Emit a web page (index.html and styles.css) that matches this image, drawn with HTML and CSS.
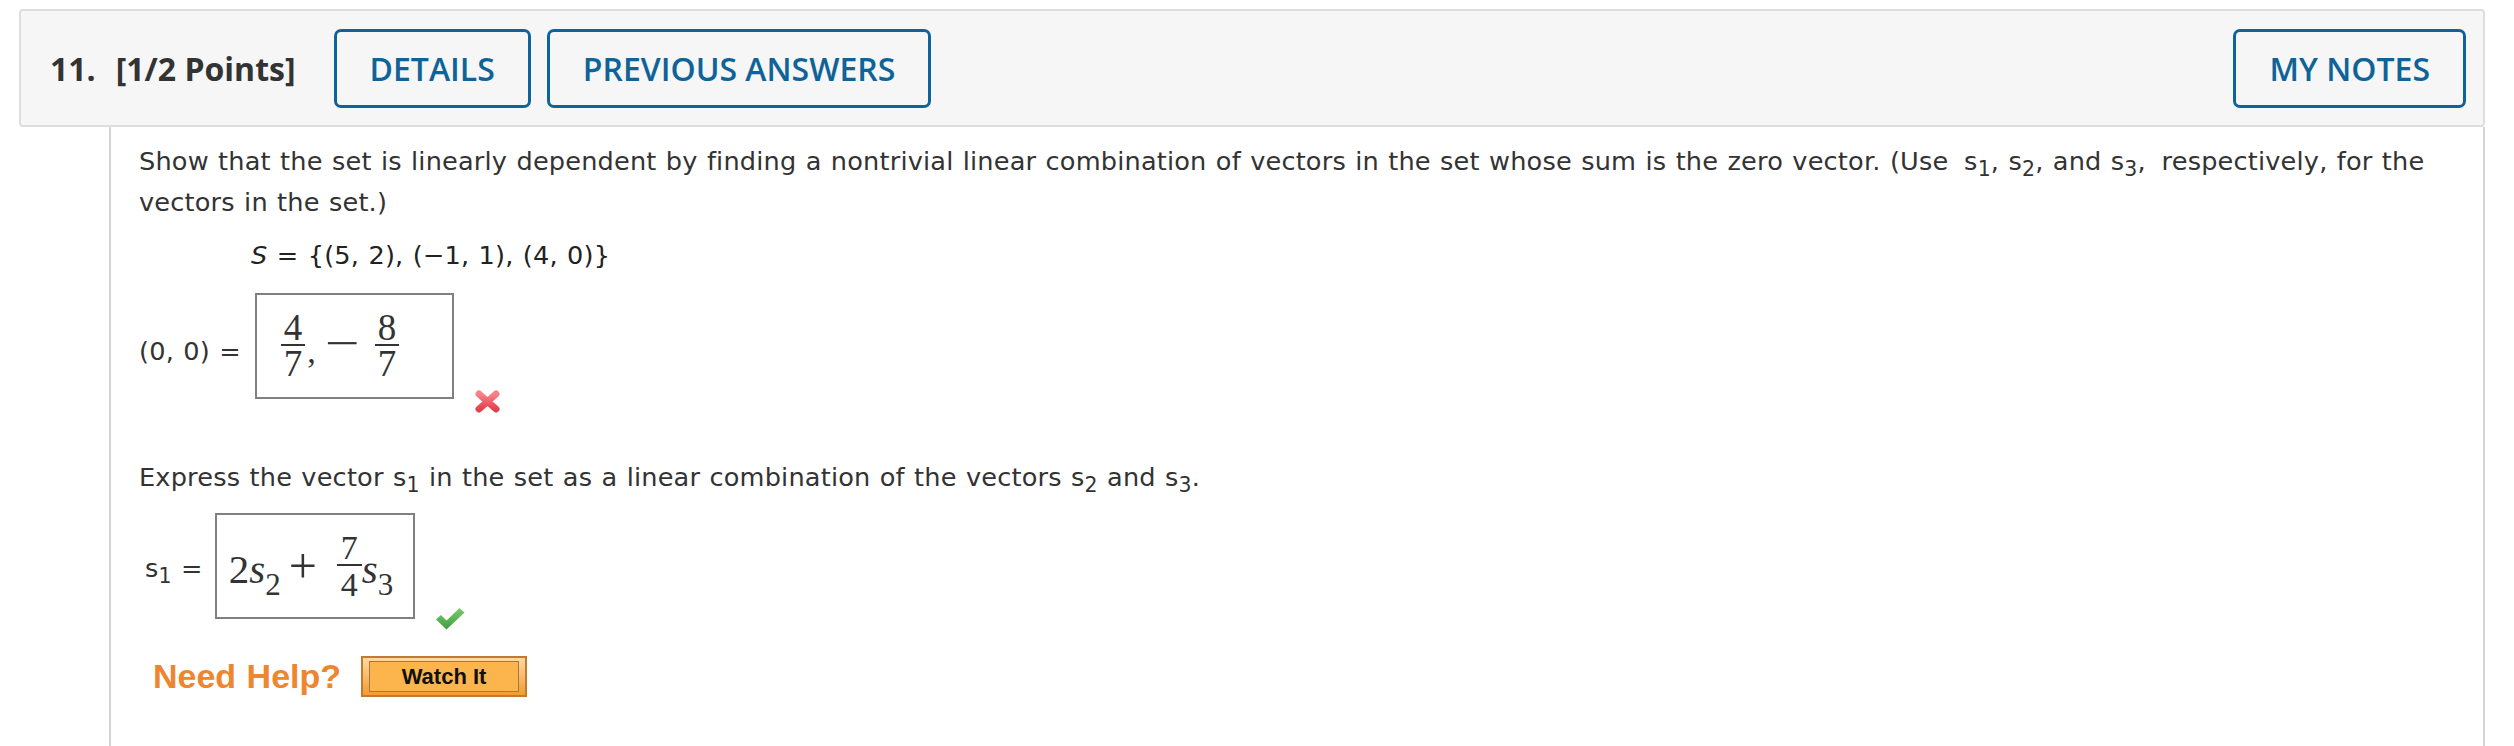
FILE: index.html
```html
<!DOCTYPE html>
<html>
<head>
<meta charset="utf-8">
<title>Question 11</title>
<link rel="stylesheet" href="styles.css">
</head>
<body>
<div class="page">
  <div class="qhead">
    <div class="qtitle"><span>11.</span><span>[1/2 Points]</span></div>
    <button class="qbtn">DETAILS</button>
    <button class="qbtn">PREVIOUS ANSWERS</button>
    <button class="qbtn notes">MY NOTES</button>
  </div>
  <div class="qbody">
    <p class="prompt">Show that the set is linearly dependent by finding a nontrivial linear combination of vectors in the set whose sum is the zero vector. (Use <span class="v">s<sub>1</sub></span>, <span class="v0">s<sub>2</sub></span>, and <span class="v0">s<sub>3</sub></span>, <span class="sp"></span>respectively, for the vectors in the set.)</p>
    <div class="setline"><i>S</i> = {(5, 2), (−1, 1), (4, 0)}</div>
    <div class="ansrow row1">
      <span class="label">(0, 0) =</span>
      <div class="ansbox box1">
        <span class="frac f1"><span class="num">4</span><span class="den">7</span></span>
        <span class="comma">,</span>
        <span class="minus">−</span>
        <span class="frac f1"><span class="num">8</span><span class="den">7</span></span>
      </div>
      <svg class="xmark" viewBox="0 0 27 23" width="27" height="23">
        <defs><linearGradient id="xg" x1="0" y1="0" x2="0" y2="1"><stop offset="0" stop-color="#f7828a"/><stop offset="1" stop-color="#e5414c"/></linearGradient></defs>
        <path d="M5 4 L22 19 M22 4 L5 19" stroke="url(#xg)" stroke-width="7" stroke-linecap="round"/>
      </svg>
    </div>
    <p class="prompt2">Express the vector s<sub>1</sub> in the set as a linear combination of the vectors s<sub>2</sub> and s<sub>3</sub>.</p>
    <div class="ansrow row2">
      <span class="label">s<sub>1</sub> =</span>
      <div class="ansbox box2">
        <span class="m">2<i>s</i><sub class="ms">2</sub></span>
        <span class="plus">+</span>
        <span class="frac f2"><span class="num">7</span><span class="den">4</span></span>
        <span class="m"><i>s</i><sub class="ms">3</sub></span>
      </div>
      <svg class="check" viewBox="0 0 30 24" width="30" height="24">
        <defs><linearGradient id="cg" x1="0" y1="0" x2="0" y2="1"><stop offset="0" stop-color="#7ccc6c"/><stop offset="1" stop-color="#3f9c3f"/></linearGradient></defs>
        <path d="M1 13.5 L6 9 L11.5 14.5 L24.5 2 L29.5 6.5 L11.5 23.5 Z" fill="url(#cg)"/>
      </svg>
    </div>
    <div class="help">
      <span class="needhelp">Need Help?</span>
      <button class="watch"><span>Watch It</span></button>
    </div>
  </div>
</div>
</body>
</html>
```

FILE: styles.css
```css
* { box-sizing: border-box; }
body {
  margin: 0;
  background: #fff;
  font-family: "DejaVu Sans", Verdana, sans-serif;
  color: #333;
}
.page { padding: 9px 29px 0 19px; }

.qhead {
  height: 118px;
  border: 2px solid #dedede;
  border-radius: 4px;
  background: #f6f6f6;
  display: flex;
  align-items: center;
  padding: 0 17px 0 29px;
  font-family: "Open Sans", sans-serif;
}
.qtitle {
  display: flex;
  gap: 20px;
  font-size: 32px;
  font-weight: 700;
  color: #333;
  margin-right: 38px;
}
.qbtn {
  height: 79px;
  border: 3px solid #0e6398;
  border-radius: 7px;
  background: transparent;
  color: #0e6398;
  font-family: "Open Sans", sans-serif;
  font-weight: 600;
  font-size: 32px;
  padding: 0 33px;
  margin-right: 16px;
}
.qbtn.notes { margin-left: auto; margin-right: 0; }

.qbody {
  margin-left: 90px;
  border-left: 2px solid #d4d4d4;
  border-right: 2px solid #d4d4d4;
  min-height: 640px;
  padding: 14px 8px 0 28px;
  font-size: 25.6px;
  line-height: 41px;
  letter-spacing: 0.18px;
  word-spacing: 1px;
}
.qbody p { margin: 0; }
sub { font-size: 0.8em; line-height: 0; vertical-align: -0.28em; }
.v { margin-left: 0.25em; }
.sp { display: inline-block; width: 0.25em; }

.setline { margin-top: 12px; padding-left: 112px; color: #222; }

.ansrow { display: flex; align-items: center; }
.row1 { margin-top: 17px; }
.row1 .label { padding-top: 10px; margin-right: 14px; }
.row2 { margin-top: 15px; }
.row2 .label { padding-top: 4px; margin-left: 6px; margin-right: 12px; }

.ansbox {
  height: 106px;
  border: 2px solid #808080;
  display: flex;
  align-items: center;
  font-family: "Liberation Serif", "DejaVu Serif", serif;
  color: #333;
  line-height: 1;
  letter-spacing: 0;
  word-spacing: 0;
}
.box1 { width: 199px; padding-left: 24px; }
.box2 { width: 200px; padding-left: 12px; }

.frac { display: inline-flex; flex-direction: column; align-items: center; }
.f1 { font-size: 37px; }
.f1 .num { line-height: 32px; border-bottom: 2px solid #333; padding: 0 3px; }
.f1 .den { line-height: 32px; padding-top: 2px; }
.comma { font-size: 34px; margin-top: 12px; margin-left: 2px; }
.minus { display: inline-block; font-size: 44px; margin-left: 14px; margin-right: 20px; margin-top: -4px; transform: scaleX(1.4); }

.m { font-size: 41px; margin-top: 6px; }
.ms { font-size: 31px; vertical-align: -0.38em; }
.plus { font-size: 50px; margin-left: 8px; margin-right: 20px; }
.f2 { font-size: 34px; margin-top: 0; }
.f2 .num { line-height: 32px; border-bottom: 2px solid #333; padding: 0 4px; }
.f2 .den { line-height: 32px; padding-top: 3px; }

.xmark { align-self: flex-end; margin-left: 20px; margin-bottom: -14px; }
.check { align-self: flex-end; margin-left: 20px; margin-bottom: -11px; }

.prompt2 { margin-top: 58px !important; }

.help { display: flex; align-items: center; margin-top: 37px; }
.needhelp {
  font-family: "Liberation Sans", Arial, sans-serif;
  font-weight: 700;
  font-size: 34px;
  color: #ee8630;
  margin-left: 14px;
  line-height: 41px;
  letter-spacing: 0;
}
.watch {
  margin-left: 20px;
  width: 166px;
  height: 41px;
  border: 2px solid #c27a30;
  background: linear-gradient(#fdd9a0, #f39c33);
  padding: 3px 6px;
  display: flex;
}
.watch span {
  flex: 1;
  border: 1px solid #a8783c;
  background: #fbb54c;
  font-family: "Liberation Sans", Arial, sans-serif;
  font-weight: 700;
  font-size: 22px;
  color: #111;
  display: flex;
  align-items: center;
  justify-content: center;
  letter-spacing: 0;
}
```
